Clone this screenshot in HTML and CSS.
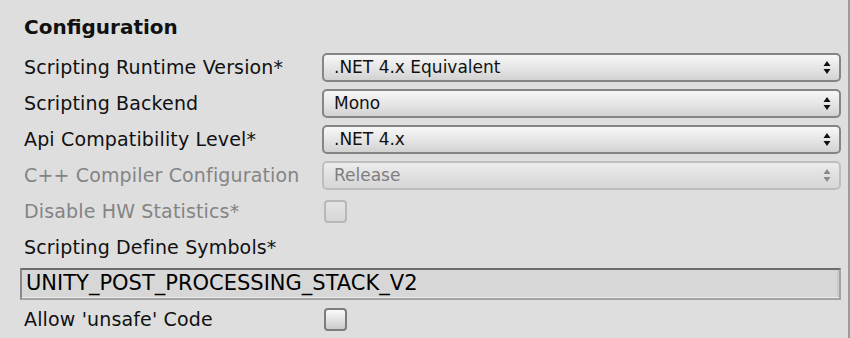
FILE: index.html
```html
<!DOCTYPE html>
<html lang="en">
<head>
    <meta charset="UTF-8">
    <title>Player Settings - Configuration</title>
    <link rel="stylesheet" href="styles.css">
</head>
<body>
    <div class="panel">
        <h2 class="section-title">Configuration</h2>

        <div class="row">
            <label class="label">Scripting Runtime Version*</label>
            <div class="popup">
                <span>.NET 4.x Equivalent</span>
                <svg class="arrows" width="8" height="13" viewBox="0 0 8 13"><path d="M4 0 L7.5 5 L0.5 5 Z M0.5 8 L7.5 8 L4 13 Z"/></svg>
            </div>
        </div>

        <div class="row">
            <label class="label">Scripting Backend</label>
            <div class="popup">
                <span>Mono</span>
                <svg class="arrows" width="8" height="13" viewBox="0 0 8 13"><path d="M4 0 L7.5 5 L0.5 5 Z M0.5 8 L7.5 8 L4 13 Z"/></svg>
            </div>
        </div>

        <div class="row">
            <label class="label">Api Compatibility Level*</label>
            <div class="popup">
                <span>.NET 4.x</span>
                <svg class="arrows" width="8" height="13" viewBox="0 0 8 13"><path d="M4 0 L7.5 5 L0.5 5 Z M0.5 8 L7.5 8 L4 13 Z"/></svg>
            </div>
        </div>

        <div class="row disabled">
            <label class="label">C++ Compiler Configuration</label>
            <div class="popup">
                <span>Release</span>
                <svg class="arrows" width="8" height="13" viewBox="0 0 8 13"><path d="M4 0 L7.5 5 L0.5 5 Z M0.5 8 L7.5 8 L4 13 Z"/></svg>
            </div>
        </div>

        <div class="row disabled">
            <label class="label">Disable HW Statistics*</label>
            <div class="checkbox"></div>
        </div>

        <div class="row">
            <label class="label">Scripting Define Symbols*</label>
        </div>
        <div class="text-field">UNITY_POST_PROCESSING_STACK_V2</div>

        <div class="row row-last">
            <label class="label">Allow 'unsafe' Code</label>
            <div class="checkbox"></div>
        </div>
    </div>
</body>
</html>
```

FILE: styles.css
```css
body {
    margin: 0;
    background: #dedede;
    font-family: 'DejaVu Sans', 'Liberation Sans', sans-serif;
    color: #111;
}

.panel {
    width: 817px;
    height: 338px;
    padding: 0 7px 0 24px;
    border-right: 2px solid #9a9a9a;
    box-sizing: content-box;
}

.section-title {
    margin: 0;
    height: 49px;
    padding-top: 14px;
    box-sizing: border-box;
    font-size: 20px;
    font-weight: bold;
    line-height: 26px;
}

.row {
    display: grid;
    grid-template-columns: 298px 1fr;
    align-items: center;
    height: 36px;
}

.label {
    font-size: 19px;
    letter-spacing: 0.15px;
    white-space: nowrap;
}

.popup {
    height: 29px;
    box-sizing: border-box;
    border: 2px solid #858585;
    border-radius: 5px;
    background: linear-gradient(#f7f7f7, #e6e6e6 50%, #d2d2d2);
    display: flex;
    align-items: center;
    justify-content: space-between;
    padding: 0 8px 0 10px;
    font-size: 17px;
}

.arrows {
    fill: #111;
}

.checkbox {
    width: 23px;
    height: 23px;
    margin-left: 2px;
    box-sizing: border-box;
    border: 2px solid #7c7c7c;
    border-radius: 4px;
    background: linear-gradient(#fbfbfb, #cbcbcb);
}

.disabled .label {
    color: #848484;
}

.disabled .popup {
    border-color: #bebebe;
    background: linear-gradient(#ececec, #e0e0e0 50%, #d6d6d6);
    color: #7e7e7e;
}

.disabled .arrows {
    fill: #8a8a8a;
}

.disabled .checkbox {
    border-color: #b8b8b8;
    background: linear-gradient(#e4e4e4, #d6d6d6);
}

.text-field {
    margin: 3px 0 0 -4px;
    height: 32px;
    box-sizing: border-box;
    border: 2px solid #a4a4a4;
    border-top-color: #6c6c6c;
    border-left-color: #8a8a8a;
    background: #d7d7d7;
    box-shadow: inset 0 -1px 0 #ececec, inset -2px 0 0 #c9c9c9;
    padding-left: 4px;
    font-size: 21px;
    line-height: 27px;
    color: #000;
}

.row-last {
    margin-top: 1px;
}
```
